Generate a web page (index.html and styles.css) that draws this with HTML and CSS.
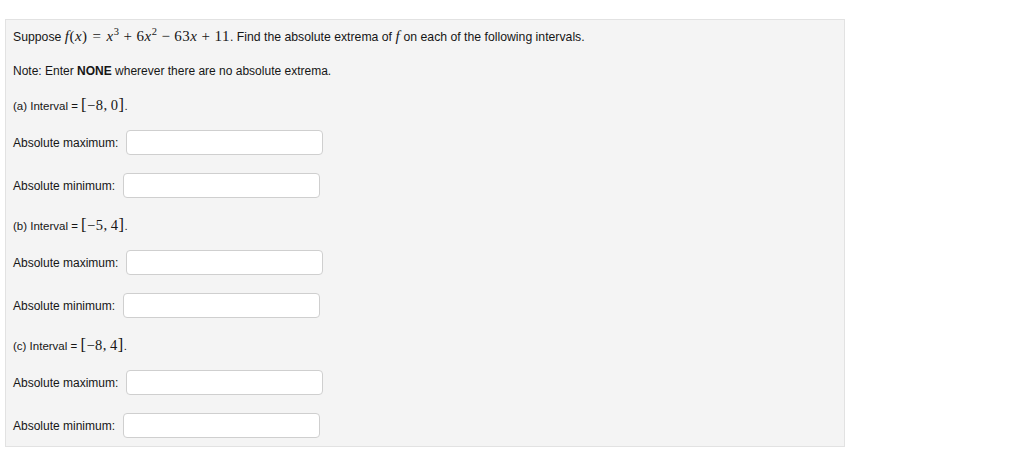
FILE: index.html
```html
<!DOCTYPE html>
<html>
<head>
<meta charset="utf-8">
<link rel="stylesheet" href="styles.css">
</head>
<body>
<div class="panel">
  <p class="line q1">Suppose <span class="math"><i>f</i>(<i>x</i>)<span class="rel">=</span><i>x</i><sup>3</sup><span class="bin">+</span>6<i>x</i><sup>2</sup><span class="bin">−</span>63<i>x</i><span class="bin">+</span>11</span>. Find the absolute extrema of <span class="math"><i>f</i></span> on each of the following intervals.</p>
  <p class="line note">Note: Enter <b>NONE</b> wherever there are no absolute extrema.</p>

  <p class="line part">(a) Interval = <span class="math"><span class="br">[</span>−8,<span class="comma"></span>0<span class="br">]</span></span>.</p>
  <div class="row max"><span class="lbl">Absolute maximum:</span><input class="box" type="text"></div>
  <div class="row min"><span class="lbl">Absolute minimum:</span><input class="box" type="text"></div>

  <p class="line part partb">(b) Interval = <span class="math"><span class="br">[</span>−5,<span class="comma"></span>4<span class="br">]</span></span>.</p>
  <div class="row max"><span class="lbl">Absolute maximum:</span><input class="box" type="text"></div>
  <div class="row min"><span class="lbl">Absolute minimum:</span><input class="box" type="text"></div>

  <p class="line part partc">(c) Interval = <span class="math"><span class="br">[</span>−8,<span class="comma"></span>4<span class="br">]</span></span>.</p>
  <div class="row max"><span class="lbl">Absolute maximum:</span><input class="box" type="text"></div>
  <div class="row min"><span class="lbl">Absolute minimum:</span><input class="box" type="text"></div>
</div>
</body>
</html>
```
FILE: styles.css
```css
html, body {
  margin: 0;
  padding: 0;
  background: #ffffff;
}
body {
  font-family: "Liberation Sans", Arial, sans-serif;
  font-size: 12px;
  color: #161616;
}
.panel {
  box-sizing: border-box;
  margin: 19px 0 0 5px;
  width: 840px;
  height: 428px;
  background: #f4f4f4;
  border: 1px solid #e2e2e2;
  padding: 7px 7px 0 7px;
}
.line {
  margin: 0;
  height: 18px;
  line-height: 18px;
  white-space: nowrap;
}
.q1 {
  font-size: 12.25px;
}
.note {
  margin-top: 17px;
}
.part {
  margin-top: 16px;
  font-size: 11.5px;
}
.partb, .partc {
  margin-top: 18px;
}
.math {
  font-family: "Liberation Serif", "Times New Roman", serif;
  font-size: 15px;
  letter-spacing: 0.5px;
}
.part .math {
  font-size: 14.5px;
}
.math i {
  font-style: italic;
}
.math sup {
  font-size: 10.5px;
  line-height: 0;
  vertical-align: 6px;
}
.rel {
  margin: 0 5px;
}
.bin {
  margin: 0 4px;
}
.comma {
  display: inline-block;
  width: 3px;
}
.br {
  font-size: 16.5px;
}
.row {
  display: flex;
  align-items: center;
  height: 25px;
}
.row.max {
  margin-top: 16px;
}
.row.min {
  margin-top: 18px;
}
.lbl {
  margin-right: 8px;
}
.box {
  box-sizing: border-box;
  width: 197px;
  height: 25px;
  margin: 0;
  border: 1px solid #cfcfcf;
  border-radius: 4px;
  background: #ffffff;
  padding: 0 6px;
  font: inherit;
}
```
